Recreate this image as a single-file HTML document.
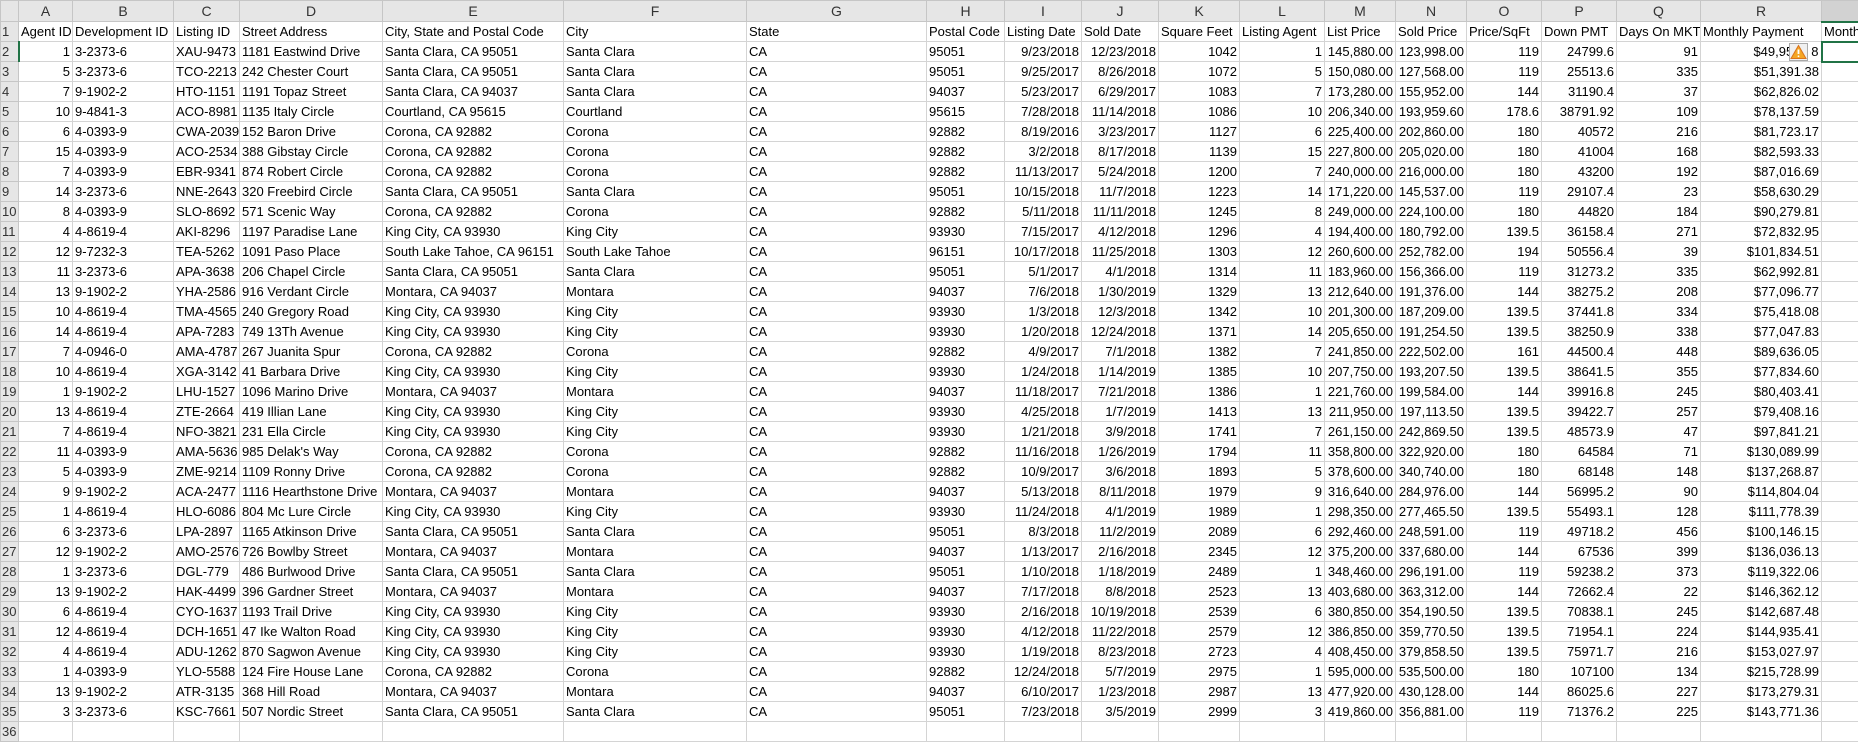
<!DOCTYPE html>
<html><head><meta charset="utf-8"><style>
body{margin:0;background:#fff;width:1858px;height:724px;overflow:hidden;font-family:"Liberation Sans",Arial,sans-serif;}
table{border-collapse:collapse;table-layout:fixed;width:1858px;font-size:13px;color:#000;}
tr{height:20px;}
thead tr{height:21px;}
td,th{padding:0 2px;border:1px solid #d4d4d4;white-space:nowrap;overflow:hidden;line-height:17px;}
thead th{background:#e6e6e6;color:#333;font-weight:normal;text-align:center;border-color:#c6c6c6;font-size:14px;}
tbody th{background:#e6e6e6;color:#333;font-weight:normal;text-align:left;padding:0 0 0 1px;border-color:#c6c6c6;font-size:13px;}
td{text-align:left;}
td:nth-child(2),td:nth-child(n+10){text-align:right;}
tr.h td{text-align:left;}
thead th.sel{background:#d2d2d2;border-bottom:2px solid #217346;}
tbody tr.r2 th{border-right:2px solid #217346;}
td.cur{border:2px solid #217346;}
.warn{position:absolute;left:1789px;top:43px;width:17px;height:16px;border:1px solid #aaa;background:#f0f0f0;}
</style></head><body>
<table>
<colgroup><col style="width:18px"><col style="width:54px"><col style="width:101px"><col style="width:66px"><col style="width:143px"><col style="width:181px"><col style="width:183px"><col style="width:180px"><col style="width:78px"><col style="width:77px"><col style="width:77px"><col style="width:81px"><col style="width:85px"><col style="width:71px"><col style="width:71px"><col style="width:75px"><col style="width:75px"><col style="width:84px"><col style="width:121px"><col style="width:37px"></colgroup>
<thead><tr><th></th><th>A</th><th>B</th><th>C</th><th>D</th><th>E</th><th>F</th><th>G</th><th>H</th><th>I</th><th>J</th><th>K</th><th>L</th><th>M</th><th>N</th><th>O</th><th>P</th><th>Q</th><th>R</th><th class="sel"></th></tr></thead>
<tbody>
<tr class="h"><th>1</th><td>Agent ID</td><td>Development ID</td><td>Listing ID</td><td>Street Address</td><td>City, State and Postal Code</td><td>City</td><td>State</td><td>Postal Code</td><td>Listing Date</td><td>Sold Date</td><td>Square Feet</td><td>Listing Agent</td><td>List Price</td><td>Sold Price</td><td>Price/SqFt</td><td>Down PMT</td><td>Days On MKT</td><td>Monthly Payment</td><td>Monthly</td></tr>
<tr class="r2"><th>2</th><td>1</td><td>3-2373-6</td><td>XAU-9473</td><td>1181 Eastwind Drive</td><td>Santa Clara, CA 95051</td><td>Santa Clara</td><td>CA</td><td>95051</td><td>9/23/2018</td><td>12/23/2018</td><td>1042</td><td>1</td><td>145,880.00</td><td>123,998.00</td><td>119</td><td>24799.6</td><td>91</td><td>$49,95&nbsp;&nbsp;&nbsp;&nbsp;&nbsp;8</td><td class="cur"></td></tr>
<tr><th>3</th><td>5</td><td>3-2373-6</td><td>TCO-2213</td><td>242 Chester Court</td><td>Santa Clara, CA 95051</td><td>Santa Clara</td><td>CA</td><td>95051</td><td>9/25/2017</td><td>8/26/2018</td><td>1072</td><td>5</td><td>150,080.00</td><td>127,568.00</td><td>119</td><td>25513.6</td><td>335</td><td>$51,391.38</td><td></td></tr>
<tr><th>4</th><td>7</td><td>9-1902-2</td><td>HTO-1151</td><td>1191 Topaz Street</td><td>Santa Clara, CA 94037</td><td>Santa Clara</td><td>CA</td><td>94037</td><td>5/23/2017</td><td>6/29/2017</td><td>1083</td><td>7</td><td>173,280.00</td><td>155,952.00</td><td>144</td><td>31190.4</td><td>37</td><td>$62,826.02</td><td></td></tr>
<tr><th>5</th><td>10</td><td>9-4841-3</td><td>ACO-8981</td><td>1135 Italy Circle</td><td>Courtland, CA 95615</td><td>Courtland</td><td>CA</td><td>95615</td><td>7/28/2018</td><td>11/14/2018</td><td>1086</td><td>10</td><td>206,340.00</td><td>193,959.60</td><td>178.6</td><td>38791.92</td><td>109</td><td>$78,137.59</td><td></td></tr>
<tr><th>6</th><td>6</td><td>4-0393-9</td><td>CWA-2039</td><td>152 Baron Drive</td><td>Corona, CA 92882</td><td>Corona</td><td>CA</td><td>92882</td><td>8/19/2016</td><td>3/23/2017</td><td>1127</td><td>6</td><td>225,400.00</td><td>202,860.00</td><td>180</td><td>40572</td><td>216</td><td>$81,723.17</td><td></td></tr>
<tr><th>7</th><td>15</td><td>4-0393-9</td><td>ACO-2534</td><td>388 Gibstay Circle</td><td>Corona, CA 92882</td><td>Corona</td><td>CA</td><td>92882</td><td>3/2/2018</td><td>8/17/2018</td><td>1139</td><td>15</td><td>227,800.00</td><td>205,020.00</td><td>180</td><td>41004</td><td>168</td><td>$82,593.33</td><td></td></tr>
<tr><th>8</th><td>7</td><td>4-0393-9</td><td>EBR-9341</td><td>874 Robert Circle</td><td>Corona, CA 92882</td><td>Corona</td><td>CA</td><td>92882</td><td>11/13/2017</td><td>5/24/2018</td><td>1200</td><td>7</td><td>240,000.00</td><td>216,000.00</td><td>180</td><td>43200</td><td>192</td><td>$87,016.69</td><td></td></tr>
<tr><th>9</th><td>14</td><td>3-2373-6</td><td>NNE-2643</td><td>320 Freebird Circle</td><td>Santa Clara, CA 95051</td><td>Santa Clara</td><td>CA</td><td>95051</td><td>10/15/2018</td><td>11/7/2018</td><td>1223</td><td>14</td><td>171,220.00</td><td>145,537.00</td><td>119</td><td>29107.4</td><td>23</td><td>$58,630.29</td><td></td></tr>
<tr><th>10</th><td>8</td><td>4-0393-9</td><td>SLO-8692</td><td>571 Scenic Way</td><td>Corona, CA 92882</td><td>Corona</td><td>CA</td><td>92882</td><td>5/11/2018</td><td>11/11/2018</td><td>1245</td><td>8</td><td>249,000.00</td><td>224,100.00</td><td>180</td><td>44820</td><td>184</td><td>$90,279.81</td><td></td></tr>
<tr><th>11</th><td>4</td><td>4-8619-4</td><td>AKI-8296</td><td>1197 Paradise Lane</td><td>King City, CA 93930</td><td>King City</td><td>CA</td><td>93930</td><td>7/15/2017</td><td>4/12/2018</td><td>1296</td><td>4</td><td>194,400.00</td><td>180,792.00</td><td>139.5</td><td>36158.4</td><td>271</td><td>$72,832.95</td><td></td></tr>
<tr><th>12</th><td>12</td><td>9-7232-3</td><td>TEA-5262</td><td>1091 Paso Place</td><td>South Lake Tahoe, CA 96151</td><td>South Lake Tahoe</td><td>CA</td><td>96151</td><td>10/17/2018</td><td>11/25/2018</td><td>1303</td><td>12</td><td>260,600.00</td><td>252,782.00</td><td>194</td><td>50556.4</td><td>39</td><td>$101,834.51</td><td></td></tr>
<tr><th>13</th><td>11</td><td>3-2373-6</td><td>APA-3638</td><td>206 Chapel Circle</td><td>Santa Clara, CA 95051</td><td>Santa Clara</td><td>CA</td><td>95051</td><td>5/1/2017</td><td>4/1/2018</td><td>1314</td><td>11</td><td>183,960.00</td><td>156,366.00</td><td>119</td><td>31273.2</td><td>335</td><td>$62,992.81</td><td></td></tr>
<tr><th>14</th><td>13</td><td>9-1902-2</td><td>YHA-2586</td><td>916 Verdant Circle</td><td>Montara, CA 94037</td><td>Montara</td><td>CA</td><td>94037</td><td>7/6/2018</td><td>1/30/2019</td><td>1329</td><td>13</td><td>212,640.00</td><td>191,376.00</td><td>144</td><td>38275.2</td><td>208</td><td>$77,096.77</td><td></td></tr>
<tr><th>15</th><td>10</td><td>4-8619-4</td><td>TMA-4565</td><td>240 Gregory Road</td><td>King City, CA 93930</td><td>King City</td><td>CA</td><td>93930</td><td>1/3/2018</td><td>12/3/2018</td><td>1342</td><td>10</td><td>201,300.00</td><td>187,209.00</td><td>139.5</td><td>37441.8</td><td>334</td><td>$75,418.08</td><td></td></tr>
<tr><th>16</th><td>14</td><td>4-8619-4</td><td>APA-7283</td><td>749 13Th Avenue</td><td>King City, CA 93930</td><td>King City</td><td>CA</td><td>93930</td><td>1/20/2018</td><td>12/24/2018</td><td>1371</td><td>14</td><td>205,650.00</td><td>191,254.50</td><td>139.5</td><td>38250.9</td><td>338</td><td>$77,047.83</td><td></td></tr>
<tr><th>17</th><td>7</td><td>4-0946-0</td><td>AMA-4787</td><td>267 Juanita Spur</td><td>Corona, CA 92882</td><td>Corona</td><td>CA</td><td>92882</td><td>4/9/2017</td><td>7/1/2018</td><td>1382</td><td>7</td><td>241,850.00</td><td>222,502.00</td><td>161</td><td>44500.4</td><td>448</td><td>$89,636.05</td><td></td></tr>
<tr><th>18</th><td>10</td><td>4-8619-4</td><td>XGA-3142</td><td>41 Barbara Drive</td><td>King City, CA 93930</td><td>King City</td><td>CA</td><td>93930</td><td>1/24/2018</td><td>1/14/2019</td><td>1385</td><td>10</td><td>207,750.00</td><td>193,207.50</td><td>139.5</td><td>38641.5</td><td>355</td><td>$77,834.60</td><td></td></tr>
<tr><th>19</th><td>1</td><td>9-1902-2</td><td>LHU-1527</td><td>1096 Marino Drive</td><td>Montara, CA 94037</td><td>Montara</td><td>CA</td><td>94037</td><td>11/18/2017</td><td>7/21/2018</td><td>1386</td><td>1</td><td>221,760.00</td><td>199,584.00</td><td>144</td><td>39916.8</td><td>245</td><td>$80,403.41</td><td></td></tr>
<tr><th>20</th><td>13</td><td>4-8619-4</td><td>ZTE-2664</td><td>419 Illian Lane</td><td>King City, CA 93930</td><td>King City</td><td>CA</td><td>93930</td><td>4/25/2018</td><td>1/7/2019</td><td>1413</td><td>13</td><td>211,950.00</td><td>197,113.50</td><td>139.5</td><td>39422.7</td><td>257</td><td>$79,408.16</td><td></td></tr>
<tr><th>21</th><td>7</td><td>4-8619-4</td><td>NFO-3821</td><td>231 Ella Circle</td><td>King City, CA 93930</td><td>King City</td><td>CA</td><td>93930</td><td>1/21/2018</td><td>3/9/2018</td><td>1741</td><td>7</td><td>261,150.00</td><td>242,869.50</td><td>139.5</td><td>48573.9</td><td>47</td><td>$97,841.21</td><td></td></tr>
<tr><th>22</th><td>11</td><td>4-0393-9</td><td>AMA-5636</td><td>985 Delak's Way</td><td>Corona, CA 92882</td><td>Corona</td><td>CA</td><td>92882</td><td>11/16/2018</td><td>1/26/2019</td><td>1794</td><td>11</td><td>358,800.00</td><td>322,920.00</td><td>180</td><td>64584</td><td>71</td><td>$130,089.99</td><td></td></tr>
<tr><th>23</th><td>5</td><td>4-0393-9</td><td>ZME-9214</td><td>1109 Ronny Drive</td><td>Corona, CA 92882</td><td>Corona</td><td>CA</td><td>92882</td><td>10/9/2017</td><td>3/6/2018</td><td>1893</td><td>5</td><td>378,600.00</td><td>340,740.00</td><td>180</td><td>68148</td><td>148</td><td>$137,268.87</td><td></td></tr>
<tr><th>24</th><td>9</td><td>9-1902-2</td><td>ACA-2477</td><td>1116 Hearthstone Drive</td><td>Montara, CA 94037</td><td>Montara</td><td>CA</td><td>94037</td><td>5/13/2018</td><td>8/11/2018</td><td>1979</td><td>9</td><td>316,640.00</td><td>284,976.00</td><td>144</td><td>56995.2</td><td>90</td><td>$114,804.04</td><td></td></tr>
<tr><th>25</th><td>1</td><td>4-8619-4</td><td>HLO-6086</td><td>804 Mc Lure Circle</td><td>King City, CA 93930</td><td>King City</td><td>CA</td><td>93930</td><td>11/24/2018</td><td>4/1/2019</td><td>1989</td><td>1</td><td>298,350.00</td><td>277,465.50</td><td>139.5</td><td>55493.1</td><td>128</td><td>$111,778.39</td><td></td></tr>
<tr><th>26</th><td>6</td><td>3-2373-6</td><td>LPA-2897</td><td>1165 Atkinson Drive</td><td>Santa Clara, CA 95051</td><td>Santa Clara</td><td>CA</td><td>95051</td><td>8/3/2018</td><td>11/2/2019</td><td>2089</td><td>6</td><td>292,460.00</td><td>248,591.00</td><td>119</td><td>49718.2</td><td>456</td><td>$100,146.15</td><td></td></tr>
<tr><th>27</th><td>12</td><td>9-1902-2</td><td>AMO-2576</td><td>726 Bowlby Street</td><td>Montara, CA 94037</td><td>Montara</td><td>CA</td><td>94037</td><td>1/13/2017</td><td>2/16/2018</td><td>2345</td><td>12</td><td>375,200.00</td><td>337,680.00</td><td>144</td><td>67536</td><td>399</td><td>$136,036.13</td><td></td></tr>
<tr><th>28</th><td>1</td><td>3-2373-6</td><td>DGL-779</td><td>486 Burlwood Drive</td><td>Santa Clara, CA 95051</td><td>Santa Clara</td><td>CA</td><td>95051</td><td>1/10/2018</td><td>1/18/2019</td><td>2489</td><td>1</td><td>348,460.00</td><td>296,191.00</td><td>119</td><td>59238.2</td><td>373</td><td>$119,322.06</td><td></td></tr>
<tr><th>29</th><td>13</td><td>9-1902-2</td><td>HAK-4499</td><td>396 Gardner Street</td><td>Montara, CA 94037</td><td>Montara</td><td>CA</td><td>94037</td><td>7/17/2018</td><td>8/8/2018</td><td>2523</td><td>13</td><td>403,680.00</td><td>363,312.00</td><td>144</td><td>72662.4</td><td>22</td><td>$146,362.12</td><td></td></tr>
<tr><th>30</th><td>6</td><td>4-8619-4</td><td>CYO-1637</td><td>1193 Trail Drive</td><td>King City, CA 93930</td><td>King City</td><td>CA</td><td>93930</td><td>2/16/2018</td><td>10/19/2018</td><td>2539</td><td>6</td><td>380,850.00</td><td>354,190.50</td><td>139.5</td><td>70838.1</td><td>245</td><td>$142,687.48</td><td></td></tr>
<tr><th>31</th><td>12</td><td>4-8619-4</td><td>DCH-1651</td><td>47 Ike Walton Road</td><td>King City, CA 93930</td><td>King City</td><td>CA</td><td>93930</td><td>4/12/2018</td><td>11/22/2018</td><td>2579</td><td>12</td><td>386,850.00</td><td>359,770.50</td><td>139.5</td><td>71954.1</td><td>224</td><td>$144,935.41</td><td></td></tr>
<tr><th>32</th><td>4</td><td>4-8619-4</td><td>ADU-1262</td><td>870 Sagwon Avenue</td><td>King City, CA 93930</td><td>King City</td><td>CA</td><td>93930</td><td>1/19/2018</td><td>8/23/2018</td><td>2723</td><td>4</td><td>408,450.00</td><td>379,858.50</td><td>139.5</td><td>75971.7</td><td>216</td><td>$153,027.97</td><td></td></tr>
<tr><th>33</th><td>1</td><td>4-0393-9</td><td>YLO-5588</td><td>124 Fire House Lane</td><td>Corona, CA 92882</td><td>Corona</td><td>CA</td><td>92882</td><td>12/24/2018</td><td>5/7/2019</td><td>2975</td><td>1</td><td>595,000.00</td><td>535,500.00</td><td>180</td><td>107100</td><td>134</td><td>$215,728.99</td><td></td></tr>
<tr><th>34</th><td>13</td><td>9-1902-2</td><td>ATR-3135</td><td>368 Hill Road</td><td>Montara, CA 94037</td><td>Montara</td><td>CA</td><td>94037</td><td>6/10/2017</td><td>1/23/2018</td><td>2987</td><td>13</td><td>477,920.00</td><td>430,128.00</td><td>144</td><td>86025.6</td><td>227</td><td>$173,279.31</td><td></td></tr>
<tr><th>35</th><td>3</td><td>3-2373-6</td><td>KSC-7661</td><td>507 Nordic Street</td><td>Santa Clara, CA 95051</td><td>Santa Clara</td><td>CA</td><td>95051</td><td>7/23/2018</td><td>3/5/2019</td><td>2999</td><td>3</td><td>419,860.00</td><td>356,881.00</td><td>119</td><td>71376.2</td><td>225</td><td>$143,771.36</td><td></td></tr>
<tr><th>36</th><td></td><td></td><td></td><td></td><td></td><td></td><td></td><td></td><td></td><td></td><td></td><td></td><td></td><td></td><td></td><td></td><td></td><td></td><td></td></tr>
</tbody></table>
<div class="warn"><svg width="17" height="16" viewBox="0 0 17 16"><path d="M8.5 1.5 L16 14.5 H1 Z" fill="#f5a623" stroke="#d9731c" stroke-width="1"/><path d="M8.5 5.5 V10" stroke="#fff" stroke-width="1.8"/><circle cx="8.5" cy="12.3" r="0.9" fill="#fff"/></svg></div>
</body></html>
